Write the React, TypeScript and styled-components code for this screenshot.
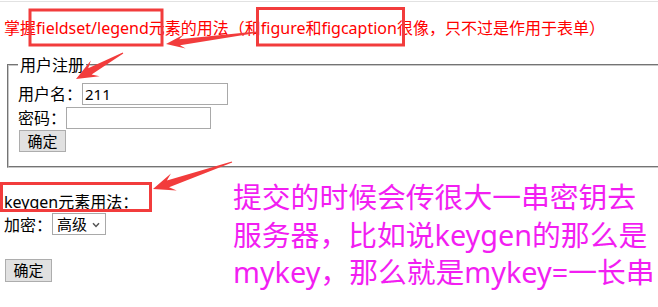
import React from "react";
import styled, { createGlobalStyle } from "styled-components";

const GlobalStyle = createGlobalStyle`
  html, body { margin: 0; padding: 0; background: #fff; overflow: hidden; }
  body {
    font-family: "Noto Sans", "Noto Sans CJK SC", sans-serif;
    color: #000;
    text-spacing-trim: space-all;
  }
`;

const Page = styled.div`
  position: relative;
  width: 658px;
  height: 306px;
  margin-top: 1px;
  border-top: 1px solid #e2e2e2;
  padding: 0 4px;
  box-sizing: border-box;
  overflow: hidden;
  font-size: 16px;
`;

const Heading = styled.p`
  margin: 14px 0 0;
  color: #ff0000;
  font-size: 16px;
  line-height: 24px;
  white-space: nowrap;
`;

const FieldSet = styled.fieldset`
  margin: 15px -60px 0 3px;
  padding: 7px 9px 14px;
  border: 2px groove #c8c8c8;
  min-width: 0;
`;

const Legend = styled.legend`
  padding: 0 2px;
  font-size: 16px;
  line-height: 20px;
`;

const FieldRow = styled.div`
  display: flex;
  align-items: center;
  height: 24px;
  line-height: 24px;
`;

const Label = styled.span`
  white-space: nowrap;
`;

const TextInput = styled.input<{ $w: number }>`
  box-sizing: border-box;
  width: ${(p) => p.$w}px;
  height: 22px;
  margin: 0;
  padding: 0 2px;
  border: 1px solid #a9a9a9;
  font-family: "Noto Sans", "Noto Sans CJK SC", sans-serif;
  font-size: 15px;
  color: #000;
  outline: none;
`;

const Button = styled.button<{ $h: number }>`
  box-sizing: border-box;
  display: block;
  width: 47px;
  height: ${(p) => p.$h}px;
  margin: 0 0 0 1px;
  padding: 0;
  border: 1px solid #adadad;
  background: #e1e1e1;
  font-family: "Noto Sans", "Noto Sans CJK SC", sans-serif;
  font-size: 15px;
  line-height: 1;
  color: #000;
`;

const KeygenTitle = styled.div`
  margin-top: 23px;
  line-height: 22px;
  height: 22px;
`;

const KeyRow = styled.div`
  display: flex;
  align-items: center;
  height: 22px;
`;

const SelectWrap = styled.div`
  position: relative;
  width: 54px;
  height: 22px;
`;

const Select = styled.select`
  appearance: none;
  -webkit-appearance: none;
  box-sizing: border-box;
  width: 54px;
  height: 22px;
  margin: 0;
  padding: 0 0 0 4px;
  border: 1px solid #a9a9a9;
  border-radius: 0;
  background: #fff;
  font-family: "Noto Sans", "Noto Sans CJK SC", sans-serif;
  font-size: 15px;
  color: #000;
  outline: none;
`;

const Chevron = styled.svg`
  position: absolute;
  right: 6px;
  top: 9px;
  pointer-events: none;
`;

const SubmitWrap = styled.div`
  margin-top: 24px;
`;

const Note = styled.div`
  position: absolute;
  left: 233px;
  top: 176px;
  color: #f21ef2;
  font-size: 28.8px;
  line-height: 37.5px;
  white-space: nowrap;
`;

const NoteLine = styled.div``;

const Overlay = styled.svg`
  position: absolute;
  left: 0;
  top: -1px;
  pointer-events: none;
`;

function arrowPoints(
  tx: number,
  ty: number,
  px: number,
  py: number,
  headLen: number,
  headHalf: number,
  shaftHalf: number
) {
  const dx = px - tx;
  const dy = py - ty;
  const L = Math.hypot(dx, dy);
  const ux = dx / L;
  const uy = dy / L;
  const nx = -uy;
  const ny = ux;
  const pt = (x: number, y: number) => `${x.toFixed(1)},${y.toFixed(1)}`;
  const neckD = headLen * 0.72;
  const pts = [
    pt(tx + nx * 0.6, ty + ny * 0.6),
    pt(px - ux * neckD + nx * shaftHalf, py - uy * neckD + ny * shaftHalf),
    pt(px - ux * headLen + nx * headHalf, py - uy * headLen + ny * headHalf),
    pt(px, py),
    pt(px - ux * headLen - nx * headHalf, py - uy * headLen - ny * headHalf),
    pt(px - ux * neckD - nx * shaftHalf, py - uy * neckD - ny * shaftHalf),
    pt(tx - nx * 0.6, ty - ny * 0.6),
  ];
  return pts.join(" ");
}

const RED = "#f23c3c";

export default function App() {
  return (
    <>
      <GlobalStyle />
      <Page>
        <Heading>
          掌握fieldset/legend元素的用法（和figure和figcaption很像，只不过是作用于表单）
        </Heading>
        <FieldSet>
          <Legend>用户注册</Legend>
          <FieldRow>
            <Label>用户名：</Label>
            <TextInput $w={146} defaultValue="211" />
          </FieldRow>
          <FieldRow>
            <Label>密码：</Label>
            <TextInput $w={145} type="password" />
          </FieldRow>
          <Button $h={22}>确定</Button>
        </FieldSet>
        <KeygenTitle>keygen元素用法：</KeygenTitle>
        <KeyRow>
          <Label>加密：</Label>
          <SelectWrap>
            <Select defaultValue="high">
              <option value="high">高级</option>
              <option value="mid">中级</option>
            </Select>
            <Chevron width="8" height="6" viewBox="0 0 8 6">
              <path d="M1 1.2 L4 4.4 L7 1.2" fill="none" stroke="#555" strokeWidth="1.5" />
            </Chevron>
          </SelectWrap>
        </KeyRow>
        <SubmitWrap>
          <Button $h={23}>确定</Button>
        </SubmitWrap>

        <Overlay width="658" height="307" viewBox="0 0 658 307">
          <rect x="30" y="9" width="132" height="35" fill="none" stroke={RED} strokeWidth="3" />
          <rect x="257.5" y="7.5" width="146" height="36.5" fill="none" stroke={RED} strokeWidth="3" />
          <rect x="1.5" y="182.5" width="149" height="27" fill="none" stroke={RED} strokeWidth="3" />
          <polygon points={arrowPoints(258, 31, 166, 43, 19, 7, 3)} fill={RED} />
          <polygon points={arrowPoints(123, 52, 76, 78, 22, 9, 3.5)} fill={RED} />
          <polygon points={arrowPoints(232, 161, 153, 188, 22, 9, 3.5)} fill={RED} />
        </Overlay>

        <Note>
          <NoteLine>提交的时候会传很大一串密钥去</NoteLine>
          <NoteLine>服务器，比如说keygen的那么是</NoteLine>
          <NoteLine>mykey，那么就是mykey=一长串</NoteLine>
        </Note>
      </Page>
    </>
  );
}
